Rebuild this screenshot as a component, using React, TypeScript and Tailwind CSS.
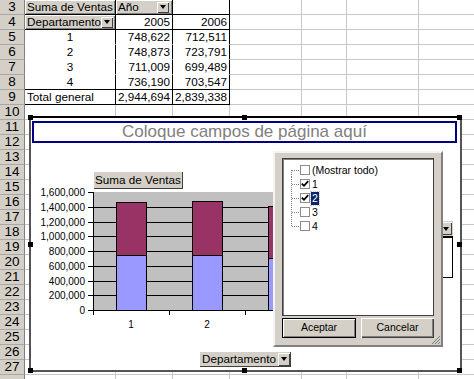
import React from "react";

interface Fila {
  dep: string;
  y2005: number;
  y2006: number;
}

const ventas: Fila[] = [
  { dep: "1", y2005: 748622, y2006: 712511 },
  { dep: "2", y2005: 748873, y2006: 723791 },
  { dep: "3", y2005: 711009, y2006: 699489 },
  { dep: "4", y2005: 736190, y2006: 703547 },
];

const fmt = (n: number) => n.toLocaleString("en-US");

const colW = ["w-[91px]", "w-[57px]", "w-[57px]", "w-[72px]", "w-[45px]", "w-[72px]", "w-[80px]"];

const raised = "bg-[#d4d0c8] shadow-[inset_1px_1px_0_#fff,inset_-1px_-1px_0_#808080]";

const Arrow: React.FC = () => (
  <span className="block w-0 h-0 border-x-[3px] border-x-transparent border-t-[4px] border-t-black" />
);

const DropButton: React.FC<{ className?: string }> = ({ className = "" }) => (
  <span
    className={`flex shrink-0 items-center justify-center w-[12px] h-[11px] bg-[#d4d0c8] shadow-[inset_1px_1px_0_#fff,inset_-1px_-1px_0_#404040] ${className}`}
  >
    <Arrow />
  </span>
);

// the last row is only a sliver at the bottom edge, so its number is left off
const RowHead: React.FC<{ n: number }> = ({ n }) => (
  <div className="w-[25px] h-[15px] shrink-0 bg-[#d4d0c8] border-r border-r-[#808080] border-b border-b-[#a8a8a8] flex items-center justify-center text-[13.5px] text-black">
    {n < 28 ? n : null}
  </div>
);

const Blank: React.FC<{ w: string }> = ({ w }) => (
  <div className={`${w} h-[15px] shrink-0 bg-white border-r border-b border-[#c8c8c8]`} />
);

// pivot cells for rows 3..9, columns B..D
function pivotCells(row: number): React.ReactNode[] {
  const base = "h-[15px] shrink-0 border-r border-r-black border-b flex items-center whitespace-nowrap overflow-hidden";
  if (row === 3) {
    return [
      <div key="b" className={`${base} ${colW[0]} border-b-black ${raised} pl-[2px]`}>Suma de Ventas</div>,
      <div key="c" className={`${base} ${colW[1]} border-b-black ${raised} pl-[2px] justify-between pr-[3px]`}>
        <span>Año</span>
        <DropButton />
      </div>,
      <div key="d" className={`${base} ${colW[2]} border-b-black bg-white`} />,
    ];
  }
  if (row === 4) {
    return [
      <div key="b" className={`${base} ${colW[0]} border-b-black ${raised} pl-[2px] justify-between pr-[2px]`}>
        <span>Departamento</span>
        <DropButton />
      </div>,
      <div key="c" className={`${base} ${colW[1]} border-b-black bg-white justify-end pr-[2px]`}>2005</div>,
      <div key="d" className={`${base} ${colW[2]} border-b-black bg-white justify-end pr-[2px]`}>2006</div>,
    ];
  }
  if (row >= 5 && row <= 8) {
    const f = ventas[row - 5];
    const bottom = row === 8 ? "border-b-black" : "border-b-white";
    return [
      <div key="b" className={`${base} ${colW[0]} ${bottom} bg-white justify-center`}>{f.dep}</div>,
      <div key="c" className={`${base} ${colW[1]} ${bottom} bg-white justify-end pr-[2px]`}>{fmt(f.y2005)}</div>,
      <div key="d" className={`${base} ${colW[2]} ${bottom} bg-white justify-end pr-[2px]`}>{fmt(f.y2006)}</div>,
    ];
  }
  const t2005 = ventas.reduce((s, f) => s + f.y2005, 0);
  const t2006 = ventas.reduce((s, f) => s + f.y2006, 0);
  return [
    <div key="b" className={`${base} ${colW[0]} border-b-black bg-white pl-[2px]`}>Total general</div>,
    <div key="c" className={`${base} ${colW[1]} border-b-black bg-white justify-end pr-[2px]`}>{fmt(t2005)}</div>,
    <div key="d" className={`${base} ${colW[2]} border-b-black bg-white justify-end pr-[2px]`}>{fmt(t2006)}</div>,
  ];
}

const Sheet: React.FC = () => {
  const rows = Array.from({ length: 26 }, (_, i) => i + 3);
  return (
    <div className="flex flex-col text-[11.7px] text-black">
      {rows.map((r) => {
        const pivot = r <= 9 ? pivotCells(r) : null;
        return (
          <div key={r} className="flex">
            <RowHead n={r} />
            {pivot}
            {colW.slice(pivot ? 3 : 0).map((w, i) => (
              <Blank key={i} w={w} />
            ))}
          </div>
        );
      })}
    </div>
  );
};

const MAX = 1600000;
const Y0 = 310;
const PH = 118;
const yOf = (v: number) => Y0 - (v / MAX) * PH;

const Plot: React.FC = () => {
  const levels = Array.from({ length: 9 }, (_, k) => k * 200000);
  return (
    <svg className="absolute inset-0" width={429} height={252} viewBox="31 118 429 252">
      <rect x={93} y={192} width={304} height={118} fill="#c0c0c0" />
      {levels.slice(1, 8).map((v) => (
        <line key={v} x1={93} x2={397} y1={Math.round(yOf(v)) + 0.5} y2={Math.round(yOf(v)) + 0.5} stroke="#000" />
      ))}
      {ventas.map((f, i) => {
        const x = 116 + 76 * i + 0.5;
        const a = Math.round(yOf(f.y2005)) + 0.5;
        const b = Math.round(yOf(f.y2005 + f.y2006)) + 0.5;
        return (
          <g key={f.dep} stroke="#000">
            <rect x={x} y={a} width={30} height={Y0 + 0.5 - a} fill="#9999ff" />
            <rect x={x} y={b} width={30} height={a - b} fill="#993366" />
          </g>
        );
      })}
      <line x1={93.5} x2={93.5} y1={192} y2={311} stroke="#000" />
      <line x1={93} x2={397} y1={310.5} y2={310.5} stroke="#000" />
      {levels.map((v) => (
        <line key={v} x1={88} x2={93} y1={Math.round(yOf(v)) + 0.5} y2={Math.round(yOf(v)) + 0.5} stroke="#000" />
      ))}
      {[93, 169, 245, 321, 397].map((x) => (
        <line key={x} x1={x + 0.5} x2={x + 0.5} y1={310} y2={315} stroke="#000" />
      ))}
      <g fontFamily="'Liberation Sans', Arial, sans-serif" fontSize={10} fill="#000">
        {levels.map((v) => (
          <text key={v} x={85} y={Math.round(yOf(v)) + 0.5} textAnchor="end" dominantBaseline="central">
            {fmt(v)}
          </text>
        ))}
        {ventas.map((f, i) => (
          <text key={f.dep} x={131 + 76 * i} y={324} textAnchor="middle" dominantBaseline="central">
            {f.dep}
          </text>
        ))}
      </g>
    </svg>
  );
};

const Chart: React.FC = () => (
  <div className="absolute left-[29px] top-[116px] w-[433px] h-[256px] bg-white border-2 border-[#555] border-t-black">
    <div className="absolute left-[1px] top-[3px] w-[425px] h-[22px] border-2 border-[#000080] flex items-center justify-center text-[17px] text-[#808080] whitespace-nowrap">
      Coloque campos de página aquí
    </div>
    <Plot />
    <div className="absolute left-[62px] top-[53px] w-[90px] h-[18px] bg-[#d4d0c8] shadow-[inset_1px_1px_0_#fff,inset_-1px_-1px_0_#404040] flex items-center pl-[2px] text-[11.7px] whitespace-nowrap">
      Suma de Ventas
    </div>
    <div className="absolute left-[369px] top-[103px] w-[53px] h-[16px] bg-[#d4d0c8] border-b border-black flex items-center justify-end pr-[1px]">
      <DropButton className="w-[10px] h-[13px]" />
    </div>
    <div className="absolute left-[369px] top-[119px] w-[53px] h-[41px] border border-black bg-white" />
    <div className="absolute left-[168px] top-[233px] w-[92px] h-[16px] bg-[#d4d0c8] shadow-[inset_1px_1px_0_#fff,inset_-1px_-1px_0_#404040] flex items-center justify-between pl-[3px] pr-[1px] text-[11.7px] whitespace-nowrap">
      <span>Departamento</span>
      <DropButton className="h-[13px]" />
    </div>
  </div>
);

const Handles: React.FC = () => (
  <>
    <div className="absolute left-[28px] top-[115px] w-[5px] h-[5px] bg-black" />
    <div className="absolute left-[242px] top-[115px] w-[5px] h-[5px] bg-black" />
    <div className="absolute left-[457px] top-[115px] w-[5px] h-[5px] bg-black" />
    <div className="absolute left-[28px] top-[242px] w-[5px] h-[5px] bg-black" />
    <div className="absolute left-[457px] top-[242px] w-[5px] h-[5px] bg-black" />
    <div className="absolute left-[28px] top-[368px] w-[5px] h-[5px] bg-black" />
    <div className="absolute left-[242px] top-[368px] w-[5px] h-[5px] bg-black" />
    <div className="absolute left-[457px] top-[368px] w-[5px] h-[5px] bg-black" />
  </>
);

const opciones = [
  { label: "(Mostrar todo)", checked: false },
  { label: "1", checked: true },
  { label: "2", checked: true, focus: true },
  { label: "3", checked: false },
  { label: "4", checked: false },
];

const Connector: React.FC<{ first: boolean; last: boolean }> = ({ first, last }) => (
  <svg width={17} height={14} className="shrink-0">
    <line x1={8.5} x2={8.5} y1={first ? 7 : 0} y2={last ? 7.5 : 14} stroke="#808080" strokeDasharray="1 1" />
    <line x1={9} x2={17} y1={7.5} y2={7.5} stroke="#808080" strokeDasharray="1 1" />
  </svg>
);

const FilterPopup: React.FC = () => (
  <div className="absolute left-[273px] top-[151px] w-[170px] h-[196px] bg-[#d4d0c8] border-2 border-t-[#f4f4f4] border-l-[#f4f4f4] border-r-[#808080] border-b-[#808080] pt-[5px] px-[7px] pb-[7px] flex flex-col text-[10.5px]">
    <div className="h-[158px] bg-white border border-[#404040] shadow-[inset_1px_1px_0_#808080] pt-[4px]">
      {opciones.map((o, i) => (
        <div key={o.label} className="flex items-center h-[14px] whitespace-nowrap">
          <Connector first={i === 0} last={i === opciones.length - 1} />
          <span className="w-[10px] h-[10px] shrink-0 border border-[#8c8c8c] bg-white flex items-center justify-center">
            {o.checked && (
              <svg width={8} height={8} viewBox="0 0 8 8">
                <path d="M0.8 3.6 L3 5.8 L7.2 1.2" fill="none" stroke="#000" strokeWidth={1.8} />
              </svg>
            )}
          </span>
          <span
            className={
              o.focus
                ? "ml-[1px] px-[1px] bg-[#0a246a] text-white leading-[13px] outline-1 outline-dotted outline-[#c0c0c0]"
                : "ml-[2px] leading-[13px]"
            }
          >
            {o.label}
          </span>
        </div>
      ))}
    </div>
    <div className="mt-[2px] flex gap-[5px] h-[20px]">
      <button className="w-[74px] h-[20px] bg-[#d4d0c8] border border-black shadow-[inset_1px_1px_0_#fff,inset_-1px_-1px_0_#808080] text-[10.5px]">
        Aceptar
      </button>
      <button className="w-[73px] h-[20px] bg-[#d4d0c8] shadow-[inset_1px_1px_0_#fff,inset_-1px_-1px_0_#404040,inset_-2px_-2px_0_#808080] text-[10.5px]">
        Cancelar
      </button>
    </div>
    <svg width={10} height={10} className="absolute right-[0px] bottom-[0px]">
      <line x1={9} y1={1} x2={1} y2={9} stroke="#808080" />
      <line x1={9} y1={4} x2={4} y2={9} stroke="#808080" />
      <line x1={9} y1={7} x2={7} y2={9} stroke="#808080" />
    </svg>
  </div>
);

const App: React.FC = () => (
  <div className="relative w-[474px] h-[379px] overflow-hidden bg-white font-['Liberation_Sans',Arial,sans-serif]">
    <Sheet />
    <Chart />
    <Handles />
    <FilterPopup />
  </div>
);

export default App;
